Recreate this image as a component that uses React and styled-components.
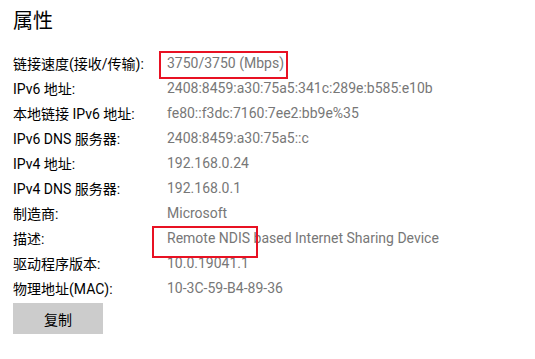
import React from "react";
import styled, { createGlobalStyle } from "styled-components";

const Global = createGlobalStyle`
  html, body { margin: 0; padding: 0; background: #ffffff; }
  body { font-family: Roboto, "Noto Sans CJK SC", sans-serif; }
`;

const Page = styled.div`
  width: 535px;
  height: 359px;
  box-sizing: border-box;
  padding: 6px 13px 0;
  background: #ffffff;
`;

const Title = styled.h1`
  margin: 0;
  font-size: 20px;
  font-weight: 400;
  line-height: 28px;
  color: #000;
  font-family: "Noto Sans CJK SC", sans-serif;
`;

const Table = styled.div`
  margin-top: 16px;
  display: grid;
  grid-template-columns: 154px 1fr;
  grid-auto-rows: 25px;
  align-items: center;
`;

const Label = styled.div`
  font-size: 14px;
  color: #000;
  white-space: nowrap;
`;

const Value = styled.div`
  font-size: 14px;
  color: #777777;
  white-space: nowrap;
`;

const Mark = styled.span`
  position: relative;
`;

const Box = styled.span`
  position: absolute;
  left: ${(p) => p.$l}px;
  top: ${(p) => p.$t}px;
  width: ${(p) => p.$w}px;
  height: ${(p) => p.$h}px;
  box-sizing: border-box;
  border: 2px solid #e81123;
  pointer-events: none;
`;

const Button = styled.button`
  margin-top: 3px;
  width: 90px;
  height: 31px;
  border: none;
  background: #cccccc;
  color: #000;
  font-size: 14px;
  font-family: "Noto Sans CJK SC", sans-serif;
  padding: 0;
`;

const rows = [
  ["链接速度(接收/传输):", "3750/3750 (Mbps)", { l: -8, t: -4, w: 129, h: 28 }],
  ["IPv6 地址:", "2408:8459:a30:75a5:341c:289e:b585:e10b"],
  ["本地链接 IPv6 地址:", "fe80::f3dc:7160:7ee2:bb9e%35"],
  ["IPv6 DNS 服务器:", "2408:8459:a30:75a5::c"],
  ["IPv4 地址:", "192.168.0.24"],
  ["IPv4 DNS 服务器:", "192.168.0.1"],
  ["制造商:", "Microsoft"],
  ["描述:", "Remote NDIS based Internet Sharing Device", { l: -15, t: -4, w: 106, h: 32 }],
  ["驱动程序版本:", "10.0.19041.1"],
  ["物理地址(MAC):", "10-3C-59-B4-89-36"],
];

export default function App() {
  return (
    <>
      <Global />
      <Page>
        <Title>属性</Title>
        <Table>
          {rows.map(([label, value, box]) => (
            <React.Fragment key={label}>
              <Label>{label}</Label>
              <Value>
                {box ? (
                  <Mark>
                    <Box $l={box.l} $t={box.t} $w={box.w} $h={box.h} />
                    {value}
                  </Mark>
                ) : (
                  value
                )}
              </Value>
            </React.Fragment>
          ))}
        </Table>
        <Button>复制</Button>
      </Page>
    </>
  );
}
